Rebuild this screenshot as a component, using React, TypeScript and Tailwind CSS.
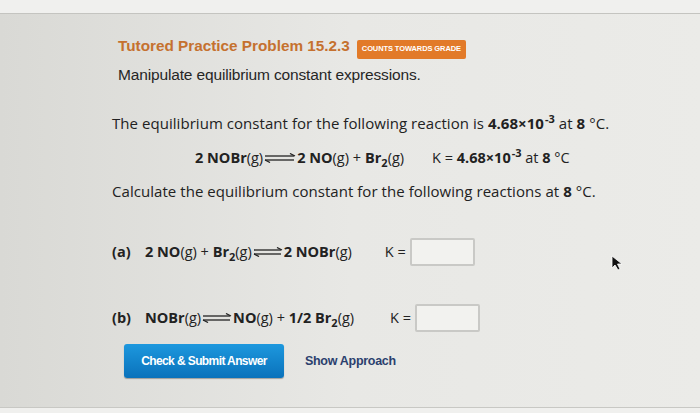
import React from "react";

const Arrow = ({ w = 34 }: { w?: number }) => (
  <svg width={w} height="10" viewBox={`0 0 ${w} 10`} className="mx-[1px] inline-block align-middle">
    <line x1="1" y1="3" x2={w - 2} y2="3" stroke="#222" strokeWidth="1.3" />
    <line x1={w - 6} y1="0.5" x2={w - 1} y2="3" stroke="#222" strokeWidth="1.3" />
    <line x1="1" y1="7" x2={w - 2} y2="7" stroke="#222" strokeWidth="1.3" />
    <line x1="1" y1="7" x2="6" y2="9.5" stroke="#222" strokeWidth="1.3" />
  </svg>
);

const Sub = ({ children }: { children: React.ReactNode }) => (
  <sub className="text-[11px] relative top-[4px]">{children}</sub>
);

const Sup = ({ children }: { children: React.ReactNode }) => (
  <sup className="text-[11px] relative -top-[6px] ml-[1px]">{children}</sup>
);

const AnswerBox = () => (
  <input
    className="w-[65px] h-[28px] border-2 border-[#c9c9c6] bg-[#f2f2ef] rounded-[2px] outline-none"
    aria-label="K"
  />
);

export default function App() {
  return (
    <div
      className="w-[700px] h-[413px] overflow-hidden relative bg-gradient-to-r from-[#d9d9d5] via-[#e8e8e5] to-[#ebebe8]"
      style={{ fontFamily: "'Open Sans', sans-serif" }}
    >
      <div className="h-[14px] bg-[#f0f0ee] border-b border-[#c4c4c0]" />
      <div className="pl-[112px] pt-[22px] text-[#222]">
        <div className="pl-[6px] h-[20px] flex items-center gap-[7px]" style={{ fontFamily: "'Liberation Sans', Arial, sans-serif" }}>
          <span className="text-[15.3px] leading-[20px] font-bold text-[#c5712f]">Tutored Practice Problem 15.2.3</span>
          <span className="bg-[#e27a28] text-white text-[7.5px] font-bold px-[5px] h-[19px] flex items-center rounded-[2px] tracking-[-0.1px] mt-[6px]">
            COUNTS TOWARDS GRADE
          </span>
        </div>
        <div className="pl-[6px] mt-[10px] text-[15.5px] leading-[18px] text-[#262626] tracking-[-0.15px]" style={{ fontFamily: "'Liberation Sans', Arial, sans-serif" }}>
          Manipulate equilibrium constant expressions.
        </div>

        <div className="mt-[29px] text-[15px] tracking-[0.05px] leading-[20px]">
          The equilibrium constant for the following reaction is <b>4.68×10<Sup>-3</Sup></b> at <b>8</b> °C.
        </div>
        <div className="mt-[15px] pl-[83px] text-[14.5px] tracking-[0px] leading-[20px] flex items-center">
          <span className="font-bold">2 NOBr</span>(g)
          <Arrow w={32} />
          <span className="font-bold">2 NO</span>(g) + <span className="font-bold ml-[4px]">Br<Sub>2</Sub></span>(g)
          <span className="ml-[28px]">K = <b>4.68×10<Sup>-3</Sup></b> at <b>8</b> °C</span>
        </div>
        <div className="mt-[13px] text-[15px] tracking-[0.05px] leading-[20px]">
          Calculate the equilibrium constant for the following reactions at <b>8</b> °C.
        </div>

        <div className="mt-[37px] flex items-center text-[14.5px] tracking-[0px]">
          <span className="font-bold w-[33px]">(a)</span>
          <span className="font-bold">2 NO</span>(g) +&nbsp;<span className="font-bold">Br<Sub>2</Sub></span>(g)
          <Arrow w={30} />
          <span className="font-bold">2 NOBr</span>(g)
          <span className="ml-[33px] mr-[4px]">K =</span>
          <AnswerBox />
        </div>

        <div className="mt-[38px] flex items-center text-[14.5px] tracking-[0px]">
          <span className="font-bold w-[33px]">(b)</span>
          <span className="font-bold">NOBr</span>(g)
          <Arrow w={30} />
          <span className="font-bold">NO</span>(g) +&nbsp;<span className="font-bold">1/2 Br<Sub>2</Sub></span>(g)
          <span className="ml-[36px] mr-[4px]">K =</span>
          <AnswerBox />
        </div>

        <div className="mt-[12px] pl-[12px] flex items-center gap-[21px]" style={{ fontFamily: "'Liberation Sans', Arial, sans-serif" }}>
          <button className="w-[160px] h-[34px] rounded-[3px] bg-gradient-to-b from-[#1d98de] to-[#0a72bb] text-white text-[12px] font-bold tracking-[-0.6px] shadow-[0_1px_1px_rgba(0,0,0,0.3)]">
            Check &amp; Submit Answer
          </button>
          <span className="text-[12.5px] font-bold text-[#2b3f6e] tracking-[-0.3px]">Show Approach</span>
        </div>
      </div>

      <svg className="absolute left-[611px] top-[255px]" width="12" height="16" viewBox="0 0 12 16">
        <path d="M1 1 L1 13 L4 10 L7 15 L9 14 L6.5 9 L11 9 Z" fill="#111" stroke="#fff" strokeWidth="0.8" />
      </svg>
      <div className="absolute left-0 right-0 top-[407px] h-[6px] bg-[#f0f0ee] border-t border-[#c8c8c4]" />
    </div>
  );
}
